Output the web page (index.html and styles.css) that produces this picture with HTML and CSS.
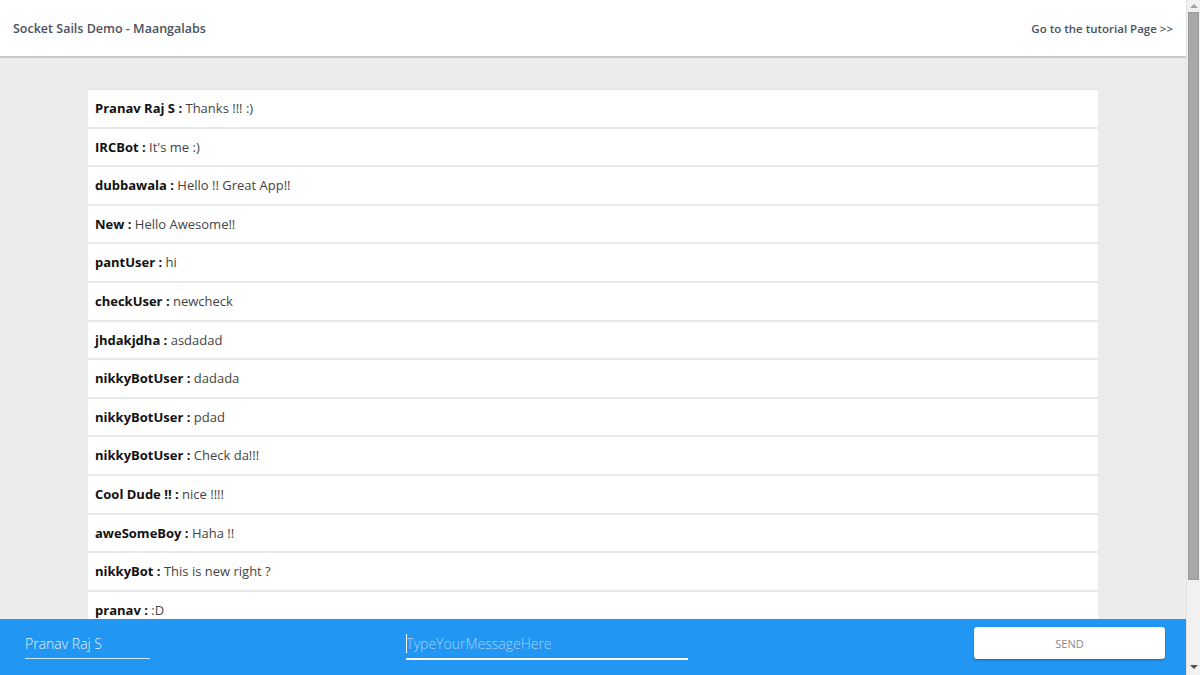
FILE: index.html
```html
<!DOCTYPE html>
<html lang="en">

<head>
  <meta charset="UTF-8">
  <meta name="viewport" content="width=device-width, initial-scale=1.0">
  <title>Socket Sails Demo - Maangalabs</title>
  <link rel="stylesheet" href="styles.css">
</head>

<body>

  <div class="window">
    <div class="app">
      <div class="header">
        <span class="brand">Socket Sails Demo - Maangalabs</span>
        <a class="tutorial" href="#">Go to the tutorial Page &gt;&gt;</a>
      </div>

      <div class="content">
        <div class="messages">
          <div class="message"><b>Pranav Raj S :</b> Thanks !!! :)</div>
          <div class="message"><b>IRCBot :</b> It's me :)</div>
          <div class="message"><b>dubbawala :</b> Hello !! Great App!!</div>
          <div class="message"><b>New :</b> Hello Awesome!!</div>
          <div class="message"><b>pantUser :</b> hi</div>
          <div class="message"><b>checkUser :</b> newcheck</div>
          <div class="message"><b>jhdakjdha :</b> asdadad</div>
          <div class="message"><b>nikkyBotUser :</b> dadada</div>
          <div class="message"><b>nikkyBotUser :</b> pdad</div>
          <div class="message"><b>nikkyBotUser :</b> Check da!!!</div>
          <div class="message"><b>Cool Dude !! :</b> nice !!!!</div>
          <div class="message"><b>aweSomeBoy :</b> Haha !!</div>
          <div class="message"><b>nikkyBot :</b> This is new right ?</div>
          <div class="message"><b>pranav :</b> :D</div>
        </div>
      </div>

      <div class="footer">
        <div class="col">
          <input class="name-input" type="text" value="Pranav Raj S">
        </div>
        <div class="col col-middle">
          <span class="caret"></span>
          <input class="msg-input" type="text" placeholder="TypeYourMessageHere">
        </div>
        <div class="col col-right">
          <button class="send">SEND</button>
        </div>
      </div>
    </div>

    <!-- barra de rolagem desenhada -->
    <div class="scrollbar">
      <span class="arrow up"></span>
      <div class="track">
        <div class="thumb"></div>
      </div>
      <span class="arrow down"></span>
    </div>
  </div>

</body>

</html>
```

FILE: styles.css
```css
html,
body {
  margin: 0;
  height: 100%;
  overflow: hidden;
}

body {
  font-family: "Open Sans", Arial, sans-serif;
  font-size: 13px;
  color: #333;
}

.window {
  display: flex;
  height: 675px;
}

.app {
  flex: 1;
  display: flex;
  flex-direction: column;
  min-width: 0;
  background-color: #ececec;
}

/* topo */
.header {
  height: 56px;
  background-color: #fff;
  border-bottom: 2px solid #c9c9c9;
  display: flex;
  justify-content: space-between;
  align-items: center;
  padding: 0 13px;
  flex-shrink: 0;
}

.brand,
.tutorial {
  font-weight: 600;
  color: #4b5160;
  text-decoration: none;
  font-size: 12.5px;
}

.tutorial {
  font-size: 11.5px;
}

/* lista de mensagens */
.content {
  flex: 1;
  overflow: hidden;
  padding: 31px 88px 0;
}

.messages {
  background-color: #fff;
  border-top: 1px solid #e4e4e4;
}

.message {
  padding: 9px 7px;
  line-height: 18.6px;
  border-bottom: 2px solid #e8e8e8;
  color: #444;
  font-weight: 400;
}

.message b {
  font-weight: 700;
  color: #111;
}

/* barra inferior */
.footer {
  height: 56px;
  box-sizing: border-box;
  padding-top: 8px;
  background-color: #2196f3;
  display: grid;
  grid-template-columns: 1fr 1fr 1fr;
  align-items: start;
  flex-shrink: 0;
}

.col {
  display: flex;
  align-items: flex-start;
}

.name-input,
.msg-input {
  font-family: "Open Sans", Arial, sans-serif;
  font-size: 14px;
  font-weight: 300;
  line-height: 20px;
  background: transparent;
  border: none;
  outline: none;
  padding: 3px 0 4px;
  margin-top: 4px;
}

.name-input {
  margin-left: 25px;
  width: 125px;
  color: #e8f3fd;
  border-bottom: 1px solid #cfe6fb;
}

.col-middle {
  padding-left: 11px;
}

.caret {
  width: 1px;
  height: 19px;
  background-color: #fff;
  margin-top: 7px;
}

.msg-input {
  width: 282px;
  margin-left: -1px;
  color: #fff;
  border-bottom: 2px solid #fff;
}

.msg-input::placeholder {
  color: #a6d2f8;
}

.col-right {
  justify-content: flex-end;
  padding-right: 21px;
}

.send {
  width: 191px;
  height: 32px;
  background-color: #fff;
  border: none;
  border-radius: 3px;
  box-shadow: 0 1px 2px rgba(0, 0, 0, 0.3);
  font-family: "Open Sans", Arial, sans-serif;
  font-size: 11px;
  color: #8a8a8a;
}

/* scrollbar */
.scrollbar {
  width: 13px;
  background-color: #f1f1f1;
  display: flex;
  flex-direction: column;
  align-items: center;
  border-left: 1px solid #e2e2e2;
}

.arrow {
  width: 0;
  height: 0;
  border-left: 4px solid transparent;
  border-right: 4px solid transparent;
  margin: 4px 0;
}

.arrow.up {
  border-bottom: 4px solid #a3a3a3;
}

.arrow.down {
  border-top: 4px solid #505050;
  margin-bottom: 6px;
}

.track {
  flex: 1;
  width: 100%;
}

.thumb {
  margin: 0 1px;
  height: 566px;
  background-color: #a8a8a8;
  border: 1px solid #999;
}
```
